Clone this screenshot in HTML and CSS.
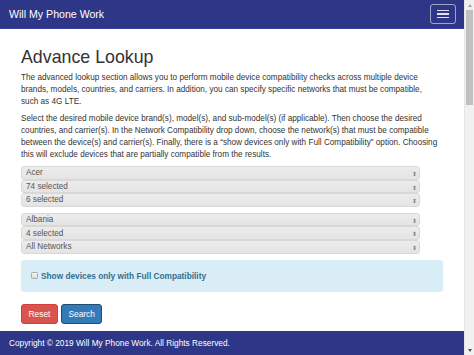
FILE: index.html
```html
<!DOCTYPE html>
<html lang="en">
<head>
    <meta charset="UTF-8">
    <meta name="viewport" content="width=device-width, initial-scale=1.0">
    <title>Advance Lookup - Will My Phone Work</title>
    <link rel="stylesheet" href="styles.css">
</head>
<body>
    <nav class="navbar">
        <a class="brand" href="#">Will My Phone Work</a>
        <button class="toggler" type="button" aria-label="Toggle navigation">
            <span class="bar"></span>
            <span class="bar"></span>
            <span class="bar"></span>
        </button>
    </nav>

    <main class="container">
        <h1>Advance Lookup</h1>
        <p>The advanced lookup section allows you to perform mobile device compatibility checks across multiple device brands, models, countries, and carriers. In addition, you can specify specific networks that must be compatible,<br>such as 4G LTE.</p>
        <p>Select the desired mobile device brand(s), model(s), and sub-model(s) (if applicable). Then choose the desired countries, and carrier(s). In the Network Compatibility drop down, choose the network(s) that must be compatible between the device(s) and carrier(s). Finally, there is a “show devices only with Full Compatibility” option. Choosing this will exclude devices that are partially compatible from the results.</p>

        <div class="select-group">
            <div class="select-wrap"><select class="picker"><option>Acer</option></select></div>
            <div class="select-wrap"><select class="picker"><option>74 selected</option></select></div>
            <div class="select-wrap"><select class="picker"><option>6 selected</option></select></div>
        </div>

        <div class="select-group">
            <div class="select-wrap"><select class="picker"><option>Albania</option></select></div>
            <div class="select-wrap"><select class="picker"><option>4 selected</option></select></div>
            <div class="select-wrap"><select class="picker"><option>All Networks</option></select></div>
        </div>

        <div class="alert">
            <label class="check">
                <input type="checkbox" id="fullCompat">
                Show devices only with Full Compatibility
            </label>
        </div>

        <div class="actions">
            <button class="btn btn-reset" type="reset">Reset</button>
            <button class="btn btn-search" type="button">Search</button>
        </div>

        <div class="results"></div>
    </main>

    <footer class="footer">
        Copyright © 2019 Will My Phone Work. All Rights Reserved.
    </footer>

    <!-- window scrollbar as it appears in the capture -->
    <div class="scrollbar" aria-hidden="true">
        <span class="arrow arrow-up"></span>
        <span class="thumb"></span>
        <span class="arrow arrow-down"></span>
    </div>
</body>
</html>
```

FILE: styles.css
```css
:root {
    --navy: #2e3687;
    --text: #333;
    --bar-width: 10px;
}

html {
    font-family: 'Liberation Sans', Arial, sans-serif;
}

body {
    margin: 0 var(--bar-width) 0 0;
    font-size: 8.2px;
    line-height: 12px;
    color: var(--text);
    background: white;
}

.navbar {
    display: flex;
    align-items: center;
    justify-content: space-between;
    height: 28px;
    padding: 0 8px 0 9px;
    background: var(--navy);
    border-bottom: 1px solid #3a43a0;
}

.brand {
    color: white;
    text-decoration: none;
    font-size: 10.6px;
}

.toggler {
    display: flex;
    flex-direction: column;
    justify-content: center;
    align-items: center;
    gap: 2.5px;
    width: 26px;
    height: 20px;
    padding: 0;
    background: transparent;
    border: 1px solid rgba(255, 255, 255, 0.55);
    border-radius: 3px;
}

.bar {
    display: block;
    width: 12px;
    height: 1.2px;
    background: rgba(255, 255, 255, 0.85);
}

.container {
    padding: 0 21px;
}

h1 {
    font-size: 17.8px;
    font-weight: normal;
    line-height: 20px;
    margin: 18px 0 5px;
}

p {
    margin: 0 0 5px;
}

.select-group {
    max-width: 399px;
    margin-bottom: 6px;
}

.select-wrap {
    position: relative;
}

.select-wrap::after {
    content: "⬍";
    position: absolute;
    right: 3px;
    top: 2px;
    font-size: 6px;
    color: #888;
    pointer-events: none;
}

.picker {
    display: block;
    width: 100%;
    height: 13.6px;
    margin: 0;
    padding: 0 4px;
    appearance: none;
    font-family: inherit;
    font-size: 8.2px;
    color: #555;
    background: linear-gradient(#ececec, #e4e4e4);
    border: 1px solid #d8d8d8;
    border-radius: 3px;
}

.alert {
    display: flex;
    align-items: center;
    height: 32px;
    padding: 0 10px;
    margin-top: 6px;
    background: #d9edf7;
    border-radius: 3px;
    box-sizing: border-box;
}

.check {
    display: flex;
    align-items: center;
    gap: 3px;
    font-size: 8.3px;
    font-weight: bold;
    color: #31708f;
}

.check input {
    appearance: none;
    width: 7px;
    height: 7px;
    margin: 0;
    border: 1px solid #a9a9a9;
    border-radius: 1.5px;
    background: linear-gradient(#f4f4f4, #dcdcdc);
}

.actions {
    display: flex;
    gap: 3px;
    margin-top: 12px;
}

.btn {
    height: 20px;
    padding: 0 6.5px;
    font-family: inherit;
    font-size: 8.4px;
    color: white;
    border: 1px solid transparent;
    border-radius: 3px;
    cursor: pointer;
}

.btn-reset {
    background: #d9534f;
    border-color: #d43f3a;
}

.btn-search {
    background: #337ab7;
    border-color: #1f4d74;
}

.results {
    min-height: 900px;
}

.footer {
    position: fixed;
    left: 0;
    right: var(--bar-width);
    bottom: 0;
    height: 24px;
    display: flex;
    align-items: center;
    padding: 0 9px;
    font-size: 8.3px;
    color: white;
    background: var(--navy);
}

.scrollbar {
    position: fixed;
    top: 0;
    right: 0;
    bottom: 0;
    width: var(--bar-width);
    display: flex;
    flex-direction: column;
    background: #f1f1f1;
    border-left: 1px solid #e6e6e6;
    box-sizing: border-box;
}

.thumb {
    height: 95px;
    margin: 0 1px;
    background: #c1c1c1;
}

.arrow {
    height: 10px;
    display: flex;
    justify-content: center;
    align-items: center;
}

.arrow::before {
    content: "";
    border-left: 2.5px solid transparent;
    border-right: 2.5px solid transparent;
}

.arrow-up::before {
    border-bottom: 3px solid #a3a3a3;
}

.arrow-down {
    margin-top: auto;
}

.arrow-down::before {
    border-top: 3px solid #505050;
}
```
